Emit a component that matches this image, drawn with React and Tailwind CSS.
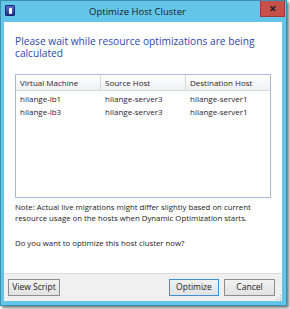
import React from 'react'

const rows = [
  { vm: 'hilange-lb1', src: 'hilange-server3', dst: 'hilange-server1' },
  { vm: 'hilange-lb3', src: 'hilange-server3', dst: 'hilange-server1' },
]

const AppIcon = () => (
  <div className="w-[10px] h-[11px] rounded-[1px] bg-gradient-to-b from-[#5a6fc8] to-[#22308a] border border-[#1b2670] flex items-center justify-center">
    <div className="w-[3px] h-[6px] bg-white rounded-[1px]" />
  </div>
)

const Button = ({ children, primary, className = '' }) => (
  <button
    className={
      'h-[17px] text-[8.5px] text-[#222] bg-gradient-to-b from-[#f2f2f2] to-[#e2e2e2] border leading-none ' +
      (primary ? 'border-[#3c8fd0] ' : 'border-[#8e8e8e] ') +
      className
    }
  >
    {children}
  </button>
)

export default function App() {
  return (
    <div className="w-[290px] h-[309px] bg-white relative" style={{ fontFamily: '"Open Sans", "Noto Sans", sans-serif' }}>
      <div className="w-[287px] h-[306px] bg-[#63c6e9] border border-[#3d8fb3] shadow-[2px_2px_3px_rgba(0,0,0,0.55)] flex flex-col">
        {/* title bar */}
        <div className="h-[21px] flex items-start relative shrink-0">
          <div className="mt-[4px] ml-[4px]">
            <AppIcon />
          </div>
          <div className="flex-1 text-center text-[9.5px] text-[#1a1a1a] pt-[5px] leading-[12px]">Optimize Host Cluster</div>
          <div className="w-[25px] h-[16px] mr-[1px] bg-[#c7504b] border border-[#9e3b37] border-t-0 flex items-center justify-center">
            <span className="text-[9px] font-bold text-[#1a1a1a] leading-none">✕</span>
          </div>
        </div>

        {/* client */}
        <div className="ml-[3px] mr-[4px] bg-white flex-1 flex flex-col">
          <div className="px-[11px] pt-[13px] text-[10.2px] leading-[12px] text-[#2f48a8]">
            Please wait while resource optimizations are being calculated
          </div>

          <div className="mx-[11px] mt-[15px] h-[124px] border border-[#a9bcd6] text-[8px] text-[#2a2230]">
            <div className="grid grid-cols-[85px_85px_1fr] h-[16px] bg-gradient-to-b from-white to-[#eef0f2] border-b border-[#d6dbe2]">
              <div className="px-[4px] flex items-center border-r border-[#d6dbe2]">Virtual Machine</div>
              <div className="px-[4px] flex items-center border-r border-[#d6dbe2]">Source Host</div>
              <div className="px-[4px] flex items-center">Destination Host</div>
            </div>
            <div className="pt-[1px]">
              {rows.map((r) => (
                <div key={r.vm} className="grid grid-cols-[85px_85px_1fr] h-[13px] items-center">
                  <div className="px-[4px]">{r.vm}</div>
                  <div className="px-[4px]">{r.src}</div>
                  <div className="px-[4px]">{r.dst}</div>
                </div>
              ))}
            </div>
          </div>

          <div className="px-[11px] mt-[4px] text-[7.8px] leading-[11px] text-[#222]">
            Note: Actual live migrations might differ slightly based on current resource usage on the hosts when Dynamic Optimization starts.
          </div>
          <div className="px-[11px] mt-[14px] text-[7.8px] leading-[11px] text-[#222]">
            Do you want to optimize this host cluster now?
          </div>

          <div className="mt-auto h-[28px] bg-[#f0f0f0] border-t border-[#dcdcdc] flex items-center px-[4px] relative">
            <Button className="w-[52px]">View Script</Button>
            <div className="flex-1" />
            <Button primary className="w-[50px]">Optimize</Button>
            <Button className="w-[51px] ml-[5px] mr-[3px]">Cancel</Button>
            <div className="absolute right-[1px] bottom-[1px] grid grid-cols-3 gap-[1px]">
              <span />
              <span />
              <span className="w-[1px] h-[1px] bg-[#b5b5b5]" />
              <span />
              <span className="w-[1px] h-[1px] bg-[#b5b5b5]" />
              <span className="w-[1px] h-[1px] bg-[#b5b5b5]" />
              <span className="w-[1px] h-[1px] bg-[#b5b5b5]" />
              <span className="w-[1px] h-[1px] bg-[#b5b5b5]" />
              <span className="w-[1px] h-[1px] bg-[#b5b5b5]" />
            </div>
          </div>
        </div>
        <div className="h-[4px] shrink-0" />
      </div>
    </div>
  )
}
